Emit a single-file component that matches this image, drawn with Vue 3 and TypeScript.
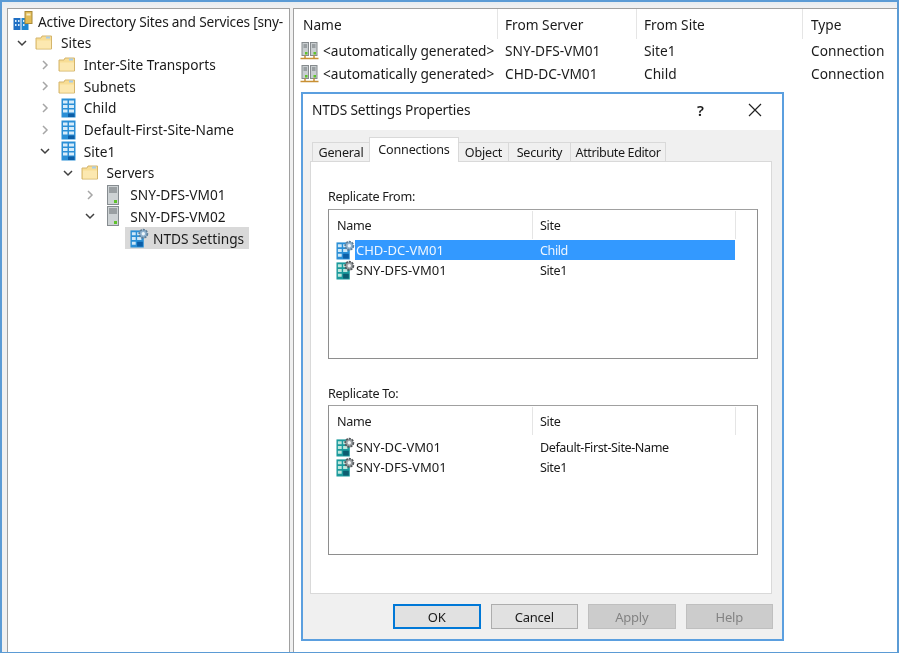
<script setup lang="ts">
type Icon = 'folder' | 'site' | 'server' | 'ntds'
interface TreeRow { label: string; level: number; chevron?: 'open' | 'closed'; icon: Icon; selected?: boolean }

const tree: TreeRow[] = [
  { label: 'Sites', level: 0, chevron: 'open', icon: 'folder' },
  { label: 'Inter-Site Transports', level: 1, chevron: 'closed', icon: 'folder' },
  { label: 'Subnets', level: 1, chevron: 'closed', icon: 'folder' },
  { label: 'Child', level: 1, chevron: 'closed', icon: 'site' },
  { label: 'Default-First-Site-Name', level: 1, chevron: 'closed', icon: 'site' },
  { label: 'Site1', level: 1, chevron: 'open', icon: 'site' },
  { label: 'Servers', level: 2, chevron: 'open', icon: 'folder' },
  { label: 'SNY-DFS-VM01', level: 3, chevron: 'closed', icon: 'server' },
  { label: 'SNY-DFS-VM02', level: 3, chevron: 'open', icon: 'server' },
  { label: 'NTDS Settings', level: 4, icon: 'ntds', selected: true }
]

const columns = ['Name', 'From Server', 'From Site', 'Type']
const connections = [
  ['<automatically generated>', 'SNY-DFS-VM01', 'Site1', 'Connection'],
  ['<automatically generated>', 'CHD-DC-VM01', 'Child', 'Connection']
]
const tabs = ['General', 'Connections', 'Object', 'Security', 'Attribute Editor']

const lists = [
  {
    title: 'Replicate From:',
    rows: [
      { name: 'CHD-DC-VM01', site: 'Child', selected: true },
      { name: 'SNY-DFS-VM01', site: 'Site1', selected: false }
    ]
  },
  {
    title: 'Replicate To:',
    rows: [
      { name: 'SNY-DC-VM01', site: 'Default-First-Site-Name', selected: false },
      { name: 'SNY-DFS-VM01', site: 'Site1', selected: false }
    ]
  }
]
const buttons = [
  { label: 'OK', kind: 'primary' },
  { label: 'Cancel', kind: 'normal' },
  { label: 'Apply', kind: 'disabled' },
  { label: 'Help', kind: 'disabled' }
]
const indent = (level: number) => ({ paddingLeft: `${7 + level * 22.75}px` })
</script>

<template>
  <div class="window">
    <svg class="defs" width="0" height="0" aria-hidden="true">
      <defs>
        <symbol id="i-folder" viewBox="0 0 18 18">
          <path d="M1 4.500h5l1-2h9.500v13H1z" fill="#f8dd94" stroke="#d4b56c" />
          <path d="M2 7h14v8H2z" fill="#fce8b0" />
          <path d="M11 3h4v2h-4z" fill="#a8cce8" />
        </symbol>
        <symbol id="i-site" viewBox="0 0 15 20">
          <rect x="0.500" y="0.500" width="14" height="19" fill="#2a8fd6" />
          <path d="M2 2.500h4.500v3H2zM8 2.500h5v3H8zM2 7h4.500v3H2zM8 7h5v3H8zM2 11.500h4.500v3H2zM8 11.500h5v3H8z" fill="#d6ecfa" />
          <rect x="7" y="15.500" width="6.500" height="3.500" fill="#0d5ea6" />
        </symbol>
        <symbol id="i-server" viewBox="0 0 14 20">
          <rect x="1.500" y="0.500" width="11" height="19" fill="#cdd2d4" stroke="#868c90" />
          <path d="M3 3h8M3 5h8M3 7h8" stroke="#666d71" stroke-width="1" />
          <rect x="8" y="15" width="3" height="3" fill="#5ec22c" />
        </symbol>
        <symbol id="i-ntds" viewBox="0 0 20 20">
          <rect x="0.500" y="2" width="14" height="18" fill="#2a8fd6" />
          <path d="M2 4h4v3H2zM7.500 4H11v3H7.500zM2 9h4v3H2zM7.500 9H12v3H7.500zM2 14h4v3H2z" fill="#cfe8f8" />
          <rect x="7.500" y="14" width="6" height="5" fill="#0d5ea6" />
          <circle cx="14" cy="5.500" r="4.300" fill="#8fb2cf" stroke="#5f7f99" stroke-width="1.800" stroke-dasharray="2.200 1" />
          <circle cx="14" cy="5.500" r="1.800" fill="#eef5fa" />
        </symbol>
        <symbol id="i-ntds-green" viewBox="0 0 20 20">
          <rect x="0.500" y="2" width="14" height="18" fill="#1a9a9c" />
          <path d="M2 4h4v3H2zM7.500 4H11v3H7.500zM2 9h4v3H2zM7.500 9H12v3H7.500zM2 14h4v3H2z" fill="#bfe6dc" />
          <rect x="7.500" y="14" width="6" height="5" fill="#0c5d70" />
          <circle cx="14" cy="5.500" r="4.300" fill="#9a9fa3" stroke="#55595c" stroke-width="1.800" stroke-dasharray="2.200 1" />
          <circle cx="14" cy="5.500" r="1.800" fill="#f2f2f2" />
        </symbol>
        <symbol id="i-conn" viewBox="0 0 18 18">
          <rect x="1.500" y="0.500" width="6.500" height="13" fill="#c9ced0" stroke="#868b8e" />
          <rect x="10" y="0.500" width="6.500" height="13" fill="#c9ced0" stroke="#868b8e" />
          <path d="M3 3h3.500M3 5h3.500M11.500 3H15M11.500 5H15" stroke="#6a7074" />
          <rect x="4.500" y="10" width="2.500" height="2.500" fill="#5ec22c" />
          <rect x="13" y="10" width="2.500" height="2.500" fill="#5ec22c" />
          <path d="M0 16.500h18M4.500 13.500v3M13.500 13.500v3" stroke="#c88f33" stroke-width="1.500" />
        </symbol>
        <symbol id="i-root" viewBox="0 0 20 20">
          <rect x="0.500" y="7" width="7" height="12" fill="#1f6fc4" />
          <rect x="8.500" y="7" width="7" height="12" fill="#1f86cf" />
          <path d="M2 9h1.500v2H2zM5 9h1.500v2H5zM2 13h1.500v2H2zM5 13h1.500v2H5zM10 9h1.500v2H10zM13 9h1.500v2H13zM10 13h1.500v2H10z" fill="#d7ecfb" />
          <rect x="12" y="0.500" width="7" height="12" fill="#e3bd57" stroke="#a98a3a" />
          <rect x="13.500" y="2.500" width="4" height="2" fill="#f8eec8" />
        </symbol>
      </defs>
    </svg>

    <div class="panes">
      <aside class="tree">
        <div class="root-row">
          <svg class="root-icon"><use href="#i-root" /></svg>
          <span>Active Directory Sites and Services [sny-</span>
        </div>
        <div v-for="row in tree" :key="row.label" class="tree-row" :style="indent(row.level)">
          <span class="chev-slot">
            <svg v-if="row.chevron" class="chev" :class="row.chevron" viewBox="0 0 10 10">
              <path v-if="row.chevron === 'open'" d="M1 3l4 4 4-4" />
              <path v-else d="M3 1l4 4-4 4" />
            </svg>
          </span>
          <span class="node" :class="{ selected: row.selected }">
            <svg class="node-icon" :class="row.icon"><use :href="`#i-${row.icon}`" /></svg>
            <span class="node-label">{{ row.label }}</span>
          </span>
        </div>
      </aside>

      <main class="details">
        <div class="detail-head">
          <div v-for="c in columns" :key="c" class="head-cell">{{ c }}</div>
        </div>
        <div v-for="(r, i) in connections" :key="i" class="detail-row">
          <div class="cell first">
            <svg class="conn-icon"><use href="#i-conn" /></svg>
            <span>{{ r[0] }}</span>
          </div>
          <div class="cell">{{ r[1] }}</div>
          <div class="cell">{{ r[2] }}</div>
          <div class="cell">{{ r[3] }}</div>
        </div>

        <section class="dialog">
          <header class="title-bar">
            <span class="title">NTDS Settings Properties</span>
            <span class="help">?</span>
            <svg class="close" viewBox="0 0 14 14"><path d="M1 1l12 12M13 1L1 13" /></svg>
          </header>
          <div class="dialog-body">
            <div class="tabs">
              <div v-for="t in tabs" :key="t" class="tab" :class="{ active: t === 'Connections' }">{{ t }}</div>
            </div>
            <div class="panel">
              <div v-for="l in lists" :key="l.title" class="group">
                <div class="group-title">{{ l.title }}</div>
                <div class="listbox">
                  <div class="list-head">
                    <div class="lh name">Name</div>
                    <div class="lh site">Site</div>
                  </div>
                  <div v-for="r in l.rows" :key="r.name" class="list-row">
                    <svg class="ntds-icon"><use :href="r.selected ? '#i-ntds' : '#i-ntds-green'" /></svg>
                    <div class="row-fill" :class="{ selected: r.selected }">
                      <span class="row-name">{{ r.name }}</span>
                      <span class="row-site">{{ r.site }}</span>
                    </div>
                  </div>
                </div>
              </div>
            </div>
            <div class="buttons">
              <button v-for="b in buttons" :key="b.label" class="btn" :class="b.kind" type="button">{{ b.label }}</button>
            </div>
          </div>
        </section>
      </main>
    </div>
  </div>
</template>

<style>
html, body { margin: 0; background: #fff; }
</style>

<style scoped>
.window {
  width: 899px;
  height: 653px;
  box-sizing: border-box;
  border: 2px solid #5b9bd5;
  border-bottom-width: 1.5px;
  background: linear-gradient(#e6ebf0 0, #eceff2 3px, #f0f0f0 6px);
  padding: 6px 0 0 5px;
  font-family: "Noto Sans", "Open Sans", sans-serif;
  font-size: 13.7px;
  color: #1a1a1a;
  overflow: hidden;
  filter: blur(0.3px);
}
.defs { position: absolute; }
.panes { display: flex; height: 100%; gap: 3px; }
.tree {
  width: 283px;
  box-sizing: border-box;
  background: #fff;
  border: 1px solid #a0a0a0;
  border-bottom: 0;
  padding-top: 1px;
}
.root-row { display: flex; align-items: center; height: 22px; padding-left: 5px; white-space: nowrap; letter-spacing: -0.2px; }
.root-icon { width: 20px; height: 20px; margin-right: 5px; flex: none; }
.tree-row { display: flex; align-items: center; height: 21.7px; }
.chev-slot { width: 14px; height: 14px; flex: none; display: flex; align-items: center; justify-content: center; }
.chev { width: 10px; height: 10px; fill: none; stroke-width: 1.5; }
.chev.open { stroke: #404040; }
.chev.closed { stroke: #a6a6a6; }
.node { display: flex; align-items: center; height: 21.7px; padding: 0 5px 0 6px; }
.node.selected { background: #d9d9d9; margin-left: 5px; padding-left: 5px; }
.node-icon { width: 18px; height: 19px; flex: none; margin-right: 8px; }
.node-icon.site { width: 15px; height: 20px; margin: 0 8px 0 3px; }
.node-icon.server { width: 14px; height: 20px; margin: 0 10px 0 3px; }
.node-icon.ntds { width: 19px; height: 20px; margin-right: 4px; }
.node-label { white-space: nowrap; }

.details {
  position: relative;
  flex: 1;
  background: #fff;
  border: 1px solid #a0a0a0;
  border-bottom: 0;
  border-right: 0;
  min-width: 0;
}
.detail-head, .detail-row { display: grid; grid-template-columns: 204px 139px 166px 1fr; }
.detail-head { height: 30px; }
.head-cell { display: flex; align-items: center; padding-left: 7px; border-right: 1px solid #e5e5e5; white-space: nowrap; }
.head-cell:first-child { padding-left: 9px; }
.head-cell:last-child { border-right: 0; padding-left: 8px; }
.detail-row { height: 23px; align-items: center; }
.cell { padding-left: 7px; white-space: nowrap; }
.cell:last-child { padding-left: 8px; }
.cell.first { display: flex; align-items: center; padding-left: 6px; letter-spacing: -0.04px; }
.conn-icon { width: 19px; height: 18px; flex: none; margin-right: 4px; }

.dialog {
  position: absolute;
  left: 7px;
  top: 83px;
  width: 483px;
  height: 549px;
  box-sizing: border-box;
  border: 2px solid #5b9fdf;
  display: flex;
  flex-direction: column;
  background: #fff;
}
.title-bar { height: 36px; box-sizing: border-box; flex: none; display: flex; align-items: center; padding: 0 0 5px 9px; }
.title { flex: 1; letter-spacing: -0.12px; }
.help { font-size: 15px; font-weight: 600; margin-right: 44px; }
.close { width: 14px; height: 14px; margin-right: 20px; fill: none; stroke: #222; stroke-width: 1.2; }
.dialog-body { flex: 1; background: #f0f0f0; padding: 7px 9px 0 7px; display: flex; flex-direction: column; font-size: 12.6px; letter-spacing: -0.3px; }
.tabs { display: flex; align-items: flex-end; height: 24px; padding-left: 3px; position: relative; z-index: 1; }
.tab {
  height: 19px;
  box-sizing: border-box;
  display: flex;
  align-items: center;
  justify-content: center;
  background: #f0f0f0;
  border: 1px solid #d9d9d9;
  border-bottom: 0;
  margin-left: -1px;
  white-space: nowrap;
  letter-spacing: -0.2px;
}
.tab:nth-child(1) { width: 58px; }
.tab:nth-child(3) { width: 51px; }
.tab:nth-child(4) { width: 63px; }
.tab:nth-child(5) { width: 96px; letter-spacing: -0.4px; }
.tab.active { width: 90px; height: 25px; background: #fff; padding-bottom: 1px; margin-bottom: -1px; }
.panel {
  width: 462px;
  height: 433px;
  box-sizing: border-box;
  background: #fff;
  border: 1px solid #d9d9d9;
  padding: 25px 13px 0 17px;
  flex: none;
}
.group + .group { margin-top: 25px; }
.group-title { height: 22px; line-height: 20px; }
.group + .group .group-title { height: 21px; }
.listbox {
  height: 150px;
  box-sizing: border-box;
  border: 1px solid #8e8e8e;
  border-top-color: #a0a0a0;
  padding: 1px;
}
.list-head { display: flex; height: 28px; margin-bottom: 1px; }
.group + .group .list-head { margin-bottom: 2px; }
.lh { display: flex; align-items: center; padding-left: 7px; border-right: 1px solid #e5e5e5; box-sizing: border-box; }
.lh.name { width: 203px; }
.lh.site { width: 203px; }
.list-row { display: flex; height: 20px; margin-left: 6px; width: 399px; }
.ntds-icon { width: 19px; height: 20px; flex: none; }
.row-fill { flex: 1; display: flex; align-items: center; padding-left: 1px; }
.row-fill.selected { background: #3399ff; color: #eef6ff; }
.row-name { width: 184px; white-space: nowrap; font-size: 13px; letter-spacing: 0; }
.row-site { white-space: nowrap; letter-spacing: -0.42px; }
.buttons { display: flex; gap: 10px; margin-top: 10px; padding-left: 83px; }
.btn {
  width: 88px;
  height: 25px;
  box-sizing: border-box;
  font: inherit;
  font-size: 13px;
  letter-spacing: -0.2px;
  padding: 0;
  color: #1a1a1a;
  background: #e1e1e1;
  border: 1px solid #adadad;
}
.btn.primary { border: 2px solid #0078d7; }
.btn.disabled { background: #cccccc; border-color: #bfbfbf; color: #838383; }
</style>
